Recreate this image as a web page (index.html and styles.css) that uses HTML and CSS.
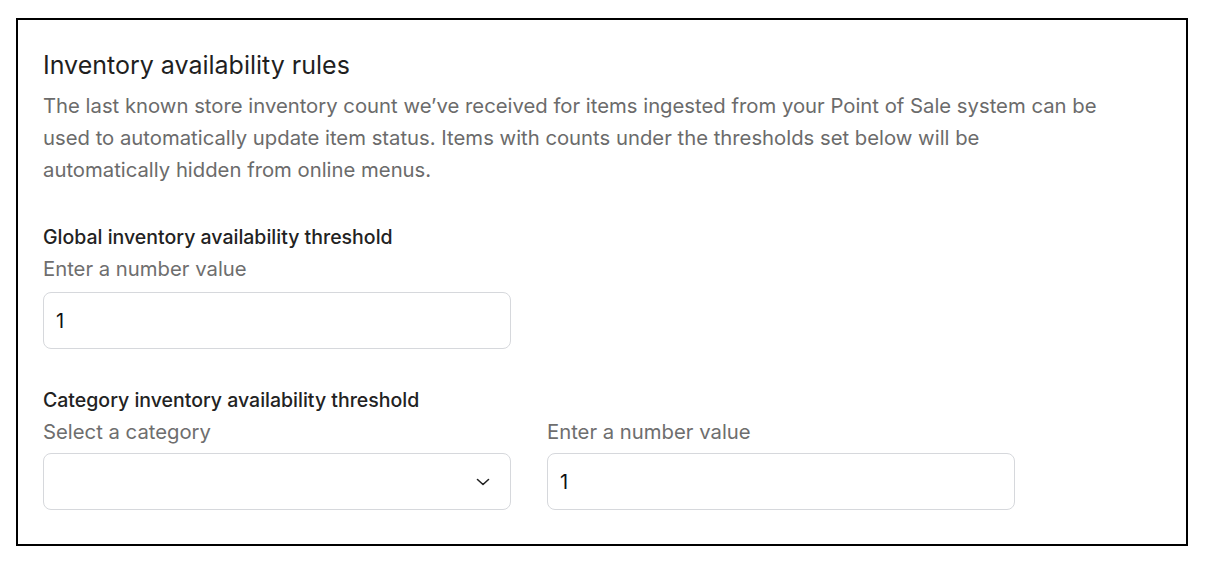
FILE: index.html
```html
<!DOCTYPE html>
<html lang="en">
<head>
<meta charset="utf-8">
<title>Inventory availability rules</title>
<link rel="stylesheet" href="styles.css">
</head>
<body>
<section class="card">
  <h2 class="title">Inventory availability rules</h2>
  <p class="desc">The last known store inventory count we’ve received for items ingested from your Point of Sale system can be used to automatically update item status. Items with counts under the thresholds set below will be automatically hidden from online menus.</p>

  <div class="field">
    <div class="label">Global inventory availability threshold</div>
    <div class="sublabel">Enter a number value</div>
    <div class="input">1</div>
  </div>

  <div class="field">
    <div class="label">Category inventory availability threshold</div>
    <div class="row">
      <div class="col">
        <div class="sublabel">Select a category</div>
        <div class="input select">
          <svg class="chev" width="14" height="8" viewBox="0 0 14 8" aria-hidden="true"><path d="M1.5 1.5 L7 6.5 L12.5 1.5" fill="none" stroke="#222" stroke-width="1.6" stroke-linecap="round" stroke-linejoin="round"/></svg>
        </div>
      </div>
      <div class="col">
        <div class="sublabel">Enter a number value</div>
        <div class="input">1</div>
      </div>
    </div>
  </div>
</section>
</body>
</html>
```

FILE: styles.css
```css
* { box-sizing: border-box; }
html, body { margin: 0; padding: 0; background: #fff; }
body {
  font-family: Inter, "Noto Sans", "Liberation Sans", sans-serif;
  color: #222;
}
.card {
  width: 1172px;
  height: 528px;
  margin: 18px 0 0 16px;
  border: 2px solid #000;
  padding: 30px 25px 34px 25px;
}
.title {
  margin: 0;
  font-size: 25px;
  line-height: 30px;
  font-weight: 400;
  color: #1f1f1f;
}
.desc {
  margin: 10px 0 0 0;
  font-size: 20.3px;
  line-height: 32px;
  color: #6b6b6b;
  max-width: 1066px;
}
.field { margin-top: 36px; }
.label {
  font-size: 19.5px;
  line-height: 31px;
  font-weight: 500;
  color: #222;
}
.sublabel {
  font-size: 20.3px;
  line-height: 31px;
  color: #6e6e6e;
}
.input {
  margin-top: 8px;
  width: 468px;
  height: 57px;
  border: 1px solid #d6d8dc;
  border-radius: 8px;
  padding: 0 12px;
  display: flex;
  align-items: center;
  font-size: 20px;
  color: #111;
}
.row {
  display: flex;
  gap: 36px;
}
.row .input { margin-top: 6px; }
.select { justify-content: flex-end; padding-right: 20px; }
.chev { display: block; }
```
